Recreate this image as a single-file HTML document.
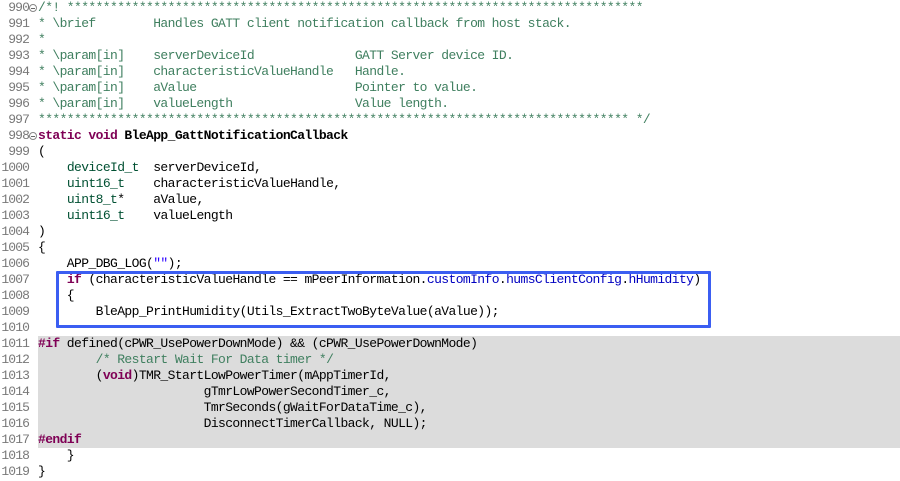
<!DOCTYPE html>
<html><head><style>
body{margin:0;width:900px;height:481px;background:#fff;overflow:hidden;position:relative;font-family:"Liberation Mono",monospace;font-size:13px;letter-spacing:-0.6px;}
.l{position:absolute;left:0;height:16px;line-height:16px;white-space:pre;width:900px}
.n{position:absolute;left:0;width:29px;text-align:right;color:#787878;letter-spacing:-0.9px}
.c{position:absolute;left:38px;color:#000}
.cm{color:#3f7f5f}
.k{color:#7f0055;font-weight:bold}
.t{color:#005032}
.f{color:#0000c0}
.fold{position:absolute;left:29px;top:4px;width:6px;height:6px;border:1px solid #888;border-radius:50%;font-size:0}
.fold:after{content:"";position:absolute;left:1px;top:2.5px;width:4px;height:1px;background:#666}
#gray{position:absolute;left:38px;top:336px;width:862px;height:112px;background:#dcdcdc}
#box{position:absolute;left:56px;top:271px;width:649px;height:51px;border:3px solid #3b5ef2;border-radius:1px}
</style></head><body>
<div id="gray"></div>
<div class="l" style="top:0"><span class="n">990</span><span class="fold"></span><span class="c cm">/*! ********************************************************************************</span></div>
<div class="l" style="top:16px"><span class="n">991</span><span class="c cm">* \brief        Handles GATT client notification callback from host stack.</span></div>
<div class="l" style="top:32px"><span class="n">992</span><span class="c cm">*</span></div>
<div class="l" style="top:48px"><span class="n">993</span><span class="c cm">* \param[in]    serverDeviceId              GATT Server device ID.</span></div>
<div class="l" style="top:64px"><span class="n">994</span><span class="c cm">* \param[in]    characteristicValueHandle   Handle.</span></div>
<div class="l" style="top:80px"><span class="n">995</span><span class="c cm">* \param[in]    aValue                      Pointer to value.</span></div>
<div class="l" style="top:96px"><span class="n">996</span><span class="c cm">* \param[in]    valueLength                 Value length.</span></div>
<div class="l" style="top:112px"><span class="n">997</span><span class="c cm">********************************************************************************** */</span></div>
<div class="l" style="top:128px"><span class="n">998</span><span class="fold"></span><span class="c"><span class="k">static void</span> <b>BleApp_GattNotificationCallback</b></span></div>
<div class="l" style="top:144px"><span class="n">999</span><span class="c">(</span></div>
<div class="l" style="top:160px"><span class="n">1000</span><span class="c">    <span class="t">deviceId_t</span>  serverDeviceId,</span></div>
<div class="l" style="top:176px"><span class="n">1001</span><span class="c">    <span class="t">uint16_t</span>    characteristicValueHandle,</span></div>
<div class="l" style="top:192px"><span class="n">1002</span><span class="c">    <span class="t">uint8_t</span>*    aValue,</span></div>
<div class="l" style="top:208px"><span class="n">1003</span><span class="c">    <span class="t">uint16_t</span>    valueLength</span></div>
<div class="l" style="top:224px"><span class="n">1004</span><span class="c">)</span></div>
<div class="l" style="top:240px"><span class="n">1005</span><span class="c">{</span></div>
<div class="l" style="top:256px"><span class="n">1006</span><span class="c">    APP_DBG_LOG(<span style="color:#2a00ff">""</span>);</span></div>
<div class="l" style="top:272px"><span class="n">1007</span><span class="c">    <span class="k">if</span> (characteristicValueHandle == mPeerInformation.<span class="f">customInfo</span>.<span class="f">humsClientConfig</span>.<span class="f">hHumidity</span>)</span></div>
<div class="l" style="top:288px"><span class="n">1008</span><span class="c">    {</span></div>
<div class="l" style="top:304px"><span class="n">1009</span><span class="c">        BleApp_PrintHumidity(Utils_ExtractTwoByteValue(aValue));</span></div>
<div class="l" style="top:320px"><span class="n">1010</span><span class="c"></span></div>
<div class="l" style="top:336px"><span class="n">1011</span><span class="c"><span class="k">#if</span> defined(cPWR_UsePowerDownMode) &amp;&amp; (cPWR_UsePowerDownMode)</span></div>
<div class="l" style="top:352px"><span class="n">1012</span><span class="c">        <span class="cm">/* Restart Wait For Data timer */</span></span></div>
<div class="l" style="top:368px"><span class="n">1013</span><span class="c">        (<span class="k">void</span>)TMR_StartLowPowerTimer(mAppTimerId,</span></div>
<div class="l" style="top:384px"><span class="n">1014</span><span class="c">                       gTmrLowPowerSecondTimer_c,</span></div>
<div class="l" style="top:400px"><span class="n">1015</span><span class="c">                       TmrSeconds(gWaitForDataTime_c),</span></div>
<div class="l" style="top:416px"><span class="n">1016</span><span class="c">                       DisconnectTimerCallback, NULL);</span></div>
<div class="l" style="top:432px"><span class="n">1017</span><span class="c"><span class="k">#endif</span></span></div>
<div class="l" style="top:448px"><span class="n">1018</span><span class="c">    }</span></div>
<div class="l" style="top:464px"><span class="n">1019</span><span class="c">}</span></div>
<div id="box"></div>
</body></html>
